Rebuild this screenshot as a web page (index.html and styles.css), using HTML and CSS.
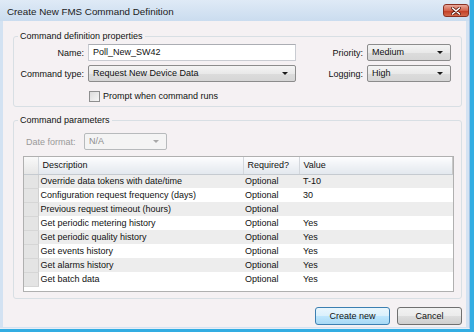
FILE: index.html
```html
<!DOCTYPE html>
<html lang="en">
<head>
    <meta charset="UTF-8">
    <title>Create New FMS Command Definition</title>
    <link rel="stylesheet" href="styles.css">
</head>
<body>
    <div class="window">
        <div class="titlebar">
            <span class="title">Create New FMS Command Definition</span>
            <span class="close">
                <svg width="10" height="8" viewBox="0 0 10 8">
                    <path d="M1.5 1 L8.5 7 M8.5 1 L1.5 7" stroke="#5a1a10" stroke-width="3" stroke-linecap="round"/>
                    <path d="M1.5 1 L8.5 7 M8.5 1 L1.5 7" stroke="#ffffff" stroke-width="1.6" stroke-linecap="round"/>
                </svg>
            </span>
        </div>
        <div class="client">
            <fieldset class="group props">
                <legend>Command definition properties</legend>
                <div class="props-grid">
                    <span class="lbl">Name:</span>
                    <span class="textbox">Poll_New_SW42</span>
                    <span class="lbl">Priority:</span>
                    <span class="combo">Medium<i class="arrow"></i></span>

                    <span class="lbl">Command type:</span>
                    <span class="combo">Request New Device Data<i class="arrow"></i></span>
                    <span class="lbl">Logging:</span>
                    <span class="combo">High<i class="arrow"></i></span>

                    <span></span>
                    <label class="check"><span class="box"></span>Prompt when command runs</label>
                </div>
            </fieldset>

            <fieldset class="group params">
                <legend>Command parameters</legend>
                <div class="date-row">
                    <span class="lbl disabled">Date format:</span>
                    <span class="combo off">N/A<i class="arrow"></i></span>
                </div>
                <div class="grid">
                    <table>
                        <colgroup>
                            <col class="w-head">
                            <col class="w-desc">
                            <col class="w-req">
                            <col>
                        </colgroup>
                        <thead>
                            <tr>
                                <th class="corner"></th>
                                <th>Description</th>
                                <th>Required?</th>
                                <th class="last">Value</th>
                            </tr>
                        </thead>
                        <tbody>
                            <tr><td class="rh"></td><td>Override data tokens with date/time</td><td>Optional</td><td>T-10</td></tr>
                            <tr><td class="rh"></td><td>Configuration request frequency (days)</td><td>Optional</td><td>30</td></tr>
                            <tr><td class="rh"></td><td>Previous request timeout (hours)</td><td>Optional</td><td></td></tr>
                            <tr><td class="rh"></td><td>Get periodic metering history</td><td>Optional</td><td>Yes</td></tr>
                            <tr><td class="rh"></td><td>Get periodic quality history</td><td>Optional</td><td>Yes</td></tr>
                            <tr><td class="rh"></td><td>Get events history</td><td>Optional</td><td>Yes</td></tr>
                            <tr><td class="rh"></td><td>Get alarms history</td><td>Optional</td><td>Yes</td></tr>
                            <tr><td class="rh"></td><td>Get batch data</td><td>Optional</td><td>Yes</td></tr>
                        </tbody>
                    </table>
                </div>
            </fieldset>

            <div class="buttons">
                <button class="btn default">Create new</button>
                <button class="btn">Cancel</button>
            </div>
        </div>
    </div>
</body>
</html>
```

FILE: styles.css
```css
* {
    box-sizing: border-box;
}
body {
    margin: 0;
    background: #33ade2;
    font-family: "Liberation Sans", Arial, sans-serif;
    font-size: 9px;
    color: #111;
}
.window {
    width: 470px;
    height: 329px;
    background: #d3e2f2;
    border-right: 1px solid #9fc4e6;
    border-bottom: 1px solid #e8eef5;
    display: flex;
    flex-direction: column;
}
.titlebar {
    height: 21px;
    flex: none;
    display: flex;
    align-items: center;
    padding: 0 0 0 7px;
    background: linear-gradient(#dfeaf6, #cadcef);
}
.title {
    flex: 1;
    font-size: 9.8px;
    color: #1b1b1b;
    padding-top: 2px;
}
.close {
    width: 26px;
    height: 13px;
    align-self: flex-start;
    margin-top: 4px;
    border: 1px solid #8a3022;
    border-radius: 3px;
    background: linear-gradient(#e9a99b, #d4634c 50%, #c23a22 51%, #d36a4c);
    display: flex;
    align-items: center;
    justify-content: center;
}
.client {
    flex: 1;
    margin: 0 3px 1px 3px;
    background: #f5f1f3;
    padding: 10px 4px 0 10px;
    display: flex;
    flex-direction: column;
}
.group {
    margin: 0;
    border: 1px solid #d8dfe4;
    border-radius: 3px;
    min-width: 0;
}
.group legend {
    padding: 0 2px;
    line-height: 11px;
}
.props {
    padding: 2px 10px 3px 6px;
}
.props legend {
    margin-left: -2px;
}
.props-grid {
    display: grid;
    grid-template-columns: 64px 208px 1fr 84px;
    grid-auto-rows: 17px;
    column-gap: 4px;
    row-gap: 4px;
    align-items: center;
}
.lbl {
    text-align: right;
    white-space: nowrap;
}
.textbox {
    height: 17px;
    background: #fff;
    border: 1px solid #c9ccd2;
    border-top-color: #abadb3;
    padding: 0 4px;
    line-height: 15px;
}
.combo {
    position: relative;
    height: 17px;
    border: 1px solid #8c8c8c;
    border-radius: 2px;
    background: linear-gradient(#f4f4f4, #e9e9e9 50%, #dcdcdc 51%, #d6d6d6);
    padding: 0 4px;
    line-height: 15px;
    white-space: nowrap;
}
.arrow {
    position: absolute;
    right: 7px;
    top: 6px;
    border-left: 3px solid transparent;
    border-right: 3px solid transparent;
    border-top: 3px solid #1a1a1a;
}
.check {
    display: flex;
    align-items: center;
    gap: 3px;
    margin-top: 3px;
    margin-left: 1px;
}
.box {
    width: 11px;
    height: 11px;
    border: 1px solid #8e8f8f;
    background: linear-gradient(135deg, #dcdcdc, #f6f6f6);
}
.params {
    margin-top: 8px;
    padding: 7px 7px 6px 9px;
}
.params legend {
    margin-left: -5px;
}
.date-row {
    display: grid;
    grid-template-columns: 58px 83px;
    align-items: center;
    padding-left: 3px;
}
.lbl.disabled {
    text-align: left;
    color: #9a9a9a;
}
.combo.off {
    border-color: #b7babc;
    background: #f4f4f4;
    color: #8d8d8d;
}
.combo.off .arrow {
    border-top-color: #a8a8a8;
}
.grid {
    margin-top: 6px;
    height: 136px;
    border: 1px solid #b0b0b0;
    background: #fff;
}
.grid table {
    width: 100%;
    border-collapse: collapse;
    table-layout: fixed;
}
.w-head {
    width: 14px;
}
.w-desc {
    width: 205px;
}
.w-req {
    width: 56px;
}
.grid th {
    height: 17px;
    padding: 0 0 0 4px;
    text-align: left;
    font-weight: normal;
    background: linear-gradient(#fdfdfe, #eef1f5 55%, #e3e8ee);
    border-right: 1px solid #d3d7dc;
    border-bottom: 1px solid #c5cad0;
}
.grid th.corner {
    padding: 0;
    background: linear-gradient(#f9f9f9, #e6e6e6);
}
.grid th.last {
    border-right: 1px solid #c8c8c8;
}
.grid td {
    height: 14px;
    padding: 0 0 0 2px;
    white-space: nowrap;
    overflow: hidden;
    line-height: 13px;
}
.grid td:nth-child(3) {
    padding-left: 2px;
}
.grid td:nth-child(4) {
    padding-left: 4px;
}
.grid tbody tr:nth-child(odd) td {
    background: #ededed;
}
.grid td.rh,
.grid tbody tr:nth-child(odd) td.rh {
    padding: 0;
    background: #e4e4e4;
    border-right: 1px solid #d0d0d0;
    border-bottom: 1px solid #d6d6d6;
}
.buttons {
    display: flex;
    justify-content: flex-end;
    gap: 7px;
    margin-top: 8px;
}
.btn {
    height: 18px;
    font-family: inherit;
    font-size: 9px;
    color: #111;
    border: 1px solid #707070;
    border-radius: 3px;
    background: linear-gradient(#f2f2f2, #ebebeb 50%, #dddddd 51%, #cfcfcf);
    padding: 0;
    width: 65px;
}
.btn.default {
    width: 75px;
    border-color: #3c7fb1;
    background: linear-gradient(#eaf6fd, #d9f0fc 50%, #bee6fd 51%, #a7d9f5);
}
```
